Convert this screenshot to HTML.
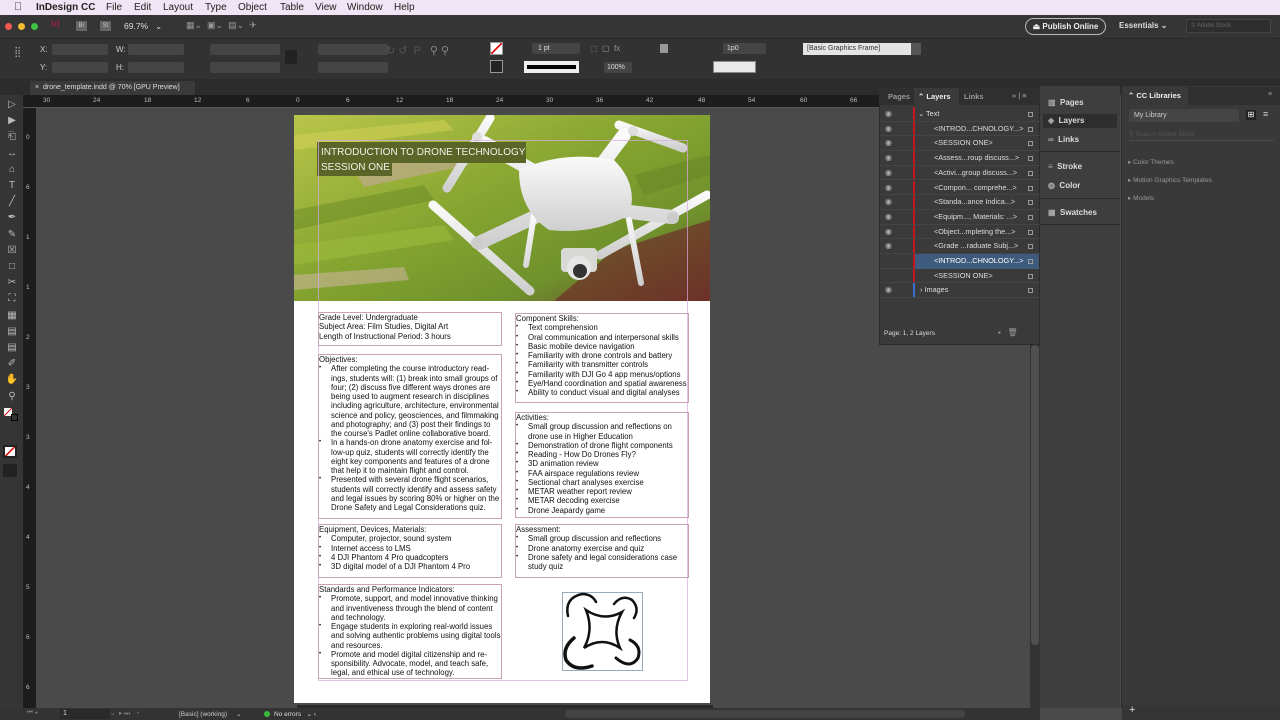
<!DOCTYPE html>
<html><head><meta charset="utf-8"><style>
*{box-sizing:border-box;margin:0;padding:0}
body{width:1280px;height:720px;overflow:hidden;background:#4a4a4a;font-family:"Liberation Sans",sans-serif;position:relative}
.a{position:absolute}
.menu{left:0;top:0;width:1280px;height:15px;background:#efe5f4;font-size:10px;color:#222;line-height:15px}
.menu span{position:absolute;top:0}
.bar{background:#3b3b3b}
.t{color:#ccc;font-size:8px}
.inp{background:#454545;border-radius:2px;height:11px}
.page{left:294px;top:115px;width:416px;height:588px;background:#fff}
.box{position:absolute;border:1px solid #c9a2b6;font-size:7.8px;line-height:9.25px;color:#111;padding:0 0 0 0}
.box p{white-space:nowrap}
.box .b{position:relative;padding-left:12px;white-space:nowrap}
.box .b:before{content:"•";position:absolute;left:0;font-size:6px}
.box .c{padding-left:12px;white-space:nowrap}
.lr{position:absolute;left:0;width:160px;height:14.7px;font-size:7.3px;color:#ddd;line-height:14.7px;border-bottom:1px solid #444}
.lr .eye{position:absolute;left:5px;color:#aaa;font-size:8px}
.lr .red{position:absolute;left:33px;top:0;width:2px;height:100%;background:#c4161c}
.lr .sq{position:absolute;left:148px;top:5px;width:5px;height:5px;border:1px solid #999}
.dk{position:absolute;left:1048px;font-size:8px;color:#ddd;font-weight:bold}
</style></head><body>
<div class="a menu">
<span style="left:14px;font-size:11px">&#63743;</span>
<span style="left:36px;font-weight:bold">InDesign CC</span>
<span style="left:106px">File</span><span style="left:134px">Edit</span><span style="left:163px">Layout</span><span style="left:205px">Type</span><span style="left:238px">Object</span><span style="left:280px">Table</span><span style="left:315px">View</span><span style="left:347px">Window</span><span style="left:394px">Help</span>
</div>
<div class="a bar" style="left:0;top:15px;width:1280px;height:23px;background:#353535"></div>
<div class="a" style="left:5px;top:23px;width:7px;height:7px;border-radius:50%;background:#ee5a52"></div>
<div class="a" style="left:18px;top:23px;width:7px;height:7px;border-radius:50%;background:#f5bd2f"></div>
<div class="a" style="left:31px;top:23px;width:7px;height:7px;border-radius:50%;background:#3ec345"></div>
<div class="a" style="left:51px;top:19px;font-size:10px;color:#8a2150;font-weight:bold">Id</div>
<div class="a" style="left:76px;top:21px;width:11px;height:10px;background:#666;font-size:6px;color:#ccc;text-align:center;line-height:10px">Br</div>
<div class="a" style="left:100px;top:21px;width:11px;height:10px;background:#666;font-size:6px;color:#ccc;text-align:center;line-height:10px">St</div>
<div class="a t" style="left:124px;top:21px;font-size:8.5px;color:#ddd">69.7% &nbsp; ⌄</div>
<div class="a t" style="left:186px;top:20px;font-size:9px;color:#999">▦⌄ &nbsp;▣⌄ &nbsp;▤⌄ &nbsp;✈</div>
<div class="a" style="left:1025px;top:18px;width:81px;height:17px;border:1px solid #bbb;border-radius:9px;font-size:8px;color:#eee;font-weight:bold;line-height:15px;text-align:center">⏏ Publish Online</div>
<div class="a" style="left:1119px;top:21px;font-size:8px;color:#ddd;font-weight:bold">Essentials ⌄</div>
<div class="a" style="left:1186px;top:19px;width:85px;height:14px;background:#2e2e2e;border:1px solid #444;font-size:6px;color:#666;line-height:12px;padding-left:4px">⚲ Adobe Stock</div>
<div class="a" style="left:0;top:38px;width:1280px;height:41px;background:#323232;border-top:1px solid #2a2a2a"></div>
<div class="a t" style="left:14px;top:47px;font-size:10px;color:#999">⣿</div>
<div class="a t" style="left:40px;top:45px">X:</div><div class="a inp" style="left:52px;top:44px;width:56px"></div>
<div class="a t" style="left:40px;top:63px">Y:</div><div class="a inp" style="left:52px;top:62px;width:56px"></div>
<div class="a t" style="left:116px;top:45px">W:</div><div class="a inp" style="left:128px;top:44px;width:56px"></div>
<div class="a t" style="left:116px;top:63px">H:</div><div class="a inp" style="left:128px;top:62px;width:56px"></div>
<div class="a inp" style="left:210px;top:44px;width:70px"></div><div class="a inp" style="left:210px;top:62px;width:70px"></div>
<div class="a" style="left:285px;top:50px;width:12px;height:14px;background:#222"></div>
<div class="a inp" style="left:318px;top:44px;width:70px"></div><div class="a inp" style="left:318px;top:62px;width:70px"></div>
<div class="a t" style="left:386px;top:44px;font-size:11px;color:#555">↻ ↺ &nbsp;P &nbsp; <span style="color:#888">⚲ ⚲</span></div>
<div class="a" style="left:490px;top:42px;width:13px;height:13px;border:1px solid #999;background:linear-gradient(135deg,#fff 44%,#d11 45%,#d11 55%,#fff 56%)"></div>
<div class="a" style="left:490px;top:60px;width:13px;height:13px;background:#222;border:1px solid #999"></div>
<div class="a inp" style="left:532px;top:43px;width:48px;color:#ddd;font-size:7px;line-height:11px;padding-left:6px">1 pt</div>
<div class="a" style="left:524px;top:61px;width:55px;height:12px;background:#eee"><div style="margin:4px 3px;height:4px;background:#000"></div></div>
<div class="a t" style="left:590px;top:44px;font-size:8px;color:#999">⬚ &nbsp;▢ &nbsp;fx</div>
<div class="a inp" style="left:604px;top:62px;width:28px;color:#ddd;font-size:7px;line-height:11px;padding-left:3px">100%</div>
<div class="a" style="left:660px;top:44px;width:8px;height:9px;background:#999"></div>
<div class="a inp" style="left:723px;top:43px;width:43px;color:#ddd;font-size:7px;line-height:11px;padding-left:4px">1p0</div>
<div class="a" style="left:713px;top:61px;width:43px;height:12px;background:#e8e8e8;border:1px solid #888"></div>
<div class="a" style="left:803px;top:43px;width:108px;height:12px;background:#e4e4e4;font-size:7px;color:#333;line-height:12px;padding-left:4px">[Basic Graphics Frame]</div>
<div class="a" style="left:911px;top:43px;width:10px;height:12px;background:#555"></div>
<div class="a" style="left:0;top:79px;width:1280px;height:16px;background:#2c2c2c"></div>
<div class="a" style="left:30px;top:81px;width:165px;height:14px;background:#3a3a3a;font-size:7px;color:#ddd;line-height:14px;padding-left:5px">×&nbsp; drone_template.indd @ 70% [GPU Preview]</div>
<div class="a" style="left:0;top:95px;width:23px;height:613px;background:#353535"></div>
<div class="a" style="left:4px;top:97px;font-size:10px;color:#bbb;line-height:16.2px;width:16px;text-align:center">▷<br>▶<br>⎗<br>↔<br>⌂<br>T<br>╱<br>✒<br>✎<br>☒<br>□<br>✂<br>⛶<br>▦<br>▤<br>▤<br>✐<br>✋<br>⚲</div>
<div class="a" style="left:4px;top:408px;width:8px;height:8px;background:linear-gradient(135deg,#fff 44%,#d11 45%,#d11 55%,#fff 56%)"></div>
<div class="a" style="left:11px;top:414px;width:7px;height:7px;border:1.5px solid #000;background:#333"></div>
<div class="a" style="left:3px;top:445px;width:14px;height:13px;background:#222"></div>
<div class="a" style="left:5px;top:447px;width:10px;height:9px;background:linear-gradient(135deg,#fff 44%,#d11 45%,#d11 55%,#fff 56%)"></div>
<div class="a" style="left:3px;top:464px;width:14px;height:13px;background:#222"></div>
<div class="a" style="left:23px;top:95px;width:1007px;height:13px;background:#1d1d1d;font-size:6.5px;color:#bbb;border-bottom:1px solid #555"></div>
<div class="a" style="left:23px;top:108px;width:13px;height:600px;background:#1d1d1d"></div>
<div class="a" style="top:97px;left:0;font-size:6.5px;color:#bbb;width:900px">
<span class="a" style="left:43px">30</span><span class="a" style="left:93px">24</span><span class="a" style="left:144px">18</span><span class="a" style="left:194px">12</span><span class="a" style="left:246px">6</span><span class="a" style="left:296px">0</span><span class="a" style="left:346px">6</span><span class="a" style="left:396px">12</span><span class="a" style="left:446px">18</span><span class="a" style="left:496px">24</span><span class="a" style="left:546px">30</span><span class="a" style="left:596px">36</span><span class="a" style="left:646px">42</span><span class="a" style="left:698px">48</span><span class="a" style="left:748px">54</span><span class="a" style="left:800px">60</span><span class="a" style="left:850px">66</span></div>
<div class="a" style="left:26px;top:113px;font-size:6.5px;color:#bbb;line-height:50px;width:8px">0<br>6<br>1<br>1<br>2<br>3<br>3<br>4<br>4<br>5<br>6<br>6</div>
<div class="a" style="left:1030px;top:95px;width:10px;height:613px;background:#333"></div>
<div class="a" style="left:1031px;top:345px;width:8px;height:300px;background:#505050;border-radius:4px"></div>
<div class="a" style="left:297px;top:705px;width:416px;height:3px;background:#2a2a2a"></div>
<div class="a page">
 <svg width="416" height="186" style="position:absolute;left:0;top:0">
  <defs>
   <linearGradient id="g" x1="0" y1="0" x2="1" y2="1"><stop offset="0" stop-color="#b9c54a"/><stop offset=".45" stop-color="#86a530"/><stop offset=".75" stop-color="#6f912c"/><stop offset="1" stop-color="#6b3a2a"/></linearGradient>
   <linearGradient id="w" x1="0" y1="0" x2="0" y2="1"><stop offset="0" stop-color="#fafafa"/><stop offset="1" stop-color="#cfcfcf"/></linearGradient>
  </defs>
  <rect width="416" height="186" fill="url(#g)"/>
  <path d="M0 20 L150 5 L160 15 L0 35 Z" fill="#d0cf55" opacity=".6"/>
  <path d="M60 55 L170 35 L175 50 L70 72 Z" fill="#c9a7a4" opacity=".55"/>
  <path d="M0 95 L130 70 L140 85 L0 115 Z" fill="#5f7f22" opacity=".4"/>
  <path d="M0 130 L150 110 L160 125 L0 150 Z" fill="#9cba3c" opacity=".6"/>
  <path d="M0 160 L110 152 L115 165 L0 175 Z" fill="#d7b8b0" opacity=".5"/>
  <path d="M320 135 L416 105 L416 186 L260 186 Z" fill="#6e2e2a" opacity=".7"/>
  <path d="M340 60 L416 40 L416 60 L350 80 Z" fill="#5f7f22" opacity=".4"/>
  <g stroke="url(#w)" stroke-linecap="round" fill="none">
   <path d="M153 73 L196 3" stroke-width="9"/>
   <path d="M325 10 L389 33" stroke-width="9"/>
   <path d="M139 90 L236 176" stroke-width="9"/>
   <path d="M306 140 L413 80" stroke-width="9"/>
   <path d="M190 28 L250 62 M330 20 L300 60 M185 128 L245 100 M378 102 L320 95" stroke-width="14"/>
   <path d="M240 100 L232 150 M335 105 L347 168" stroke-width="6"/>
  </g>
  <path d="M225 55 Q270 35 320 45 Q345 70 335 100 Q300 120 255 115 Q225 95 225 55Z" fill="url(#w)"/>
  <circle cx="183" cy="22" r="5" fill="#ddd"/><circle cx="339" cy="16" r="5" fill="#ddd"/><circle cx="183" cy="128" r="6" fill="#ccc"/><circle cx="379" cy="103" r="6" fill="#ccc"/>
  <rect x="267" y="133" width="36" height="24" rx="4" fill="#d8d8d4"/>
  <circle cx="285" cy="153" r="12" fill="#e6e6e6"/><circle cx="286" cy="156" r="7" fill="#333"/>
 </svg>
 <div class="a" style="left:23px;top:27px;width:209px;height:21px;background:#5a6528;color:#f3f3e8;font-size:10px;line-height:21px;padding-left:4px">INTRODUCTION TO DRONE TECHNOLOGY</div>
 <div class="a" style="left:23px;top:44px;width:75px;height:17px;background:#5a6528;color:#f3f3e8;font-size:10px;line-height:17px;padding-left:4px">SESSION ONE</div>
 <div class="a" style="left:24px;top:25px;width:370px;height:541px;border:1px solid #d9a8e0;opacity:.7"></div>
</div>
<div class="box" style="left:318px;top:312px;width:184px;height:34px"><p>Grade Level: Undergraduate</p><p>Subject Area: Film Studies, Digital Art</p><p>Length of Instructional Period: 3 hours</p></div>
<div class="box" style="left:318px;top:354px;width:184px;height:165px"><p>Objectives:</p>
<p class="b">After completing the course introductory read-</p><p class="c">ings, students will: (1) break into small groups of</p><p class="c">four; (2) discuss five different ways drones are</p><p class="c">being used to augment research in disciplines</p><p class="c">including agriculture, architecture, environmental</p><p class="c">science and policy, geosciences, and filmmaking</p><p class="c">and photography; and (3) post their findings to</p><p class="c">the course's Padlet online collaborative board.</p>
<p class="b">In a hands-on drone anatomy exercise and fol-</p><p class="c">low-up quiz, students will correctly identify the</p><p class="c">eight key components and features of a drone</p><p class="c">that help it to maintain flight and control.</p>
<p class="b">Presented with several drone flight scenarios,</p><p class="c">students will correctly identify and assess safety</p><p class="c">and legal issues by scoring 80% or higher on the</p><p class="c">Drone Safety and Legal Considerations quiz.</p></div>
<div class="box" style="left:318px;top:524px;width:184px;height:54px"><p>Equipment, Devices, Materials:</p><p class="b">Computer, projector, sound system</p><p class="b">Internet access to LMS</p><p class="b">4 DJI Phantom 4 Pro quadcopters</p><p class="b">3D digital model of a DJI Phantom 4 Pro</p></div>
<div class="box" style="left:318px;top:584px;width:184px;height:95px"><p>Standards and Performance Indicators:</p><p class="b">Promote, support, and model innovative thinking</p><p class="c">and inventiveness through the blend of content</p><p class="c">and technology.</p><p class="b">Engage students in exploring real-world issues</p><p class="c">and solving authentic problems using digital tools</p><p class="c">and resources.</p><p class="b">Promote and model digital citizenship and re-</p><p class="c">sponsibility. Advocate, model, and teach safe,</p><p class="c">legal, and ethical use of technology.</p></div>
<div class="box" style="left:515px;top:313px;width:174px;height:90px"><p>Component Skills:</p><p class="b">Text comprehension</p><p class="b">Oral communication and interpersonal skills</p><p class="b">Basic mobile device navigation</p><p class="b">Familiarity with drone controls and battery</p><p class="b">Familiarity with transmitter controls</p><p class="b">Familiarity with DJI Go 4 app menus/options</p><p class="b">Eye/Hand coordination and spatial awareness</p><p class="b">Ability to conduct visual and digital analyses</p></div>
<div class="box" style="left:515px;top:412px;width:174px;height:106px"><p>Activities:</p><p class="b">Small group discussion and reflections on</p><p class="c">drone use in Higher Education</p><p class="b">Demonstration of drone flight components</p><p class="b">Reading - How Do Drones Fly?</p><p class="b">3D animation review</p><p class="b">FAA airspace regulations review</p><p class="b">Sectional chart analyses exercise</p><p class="b">METAR weather report review</p><p class="b">METAR decoding exercise</p><p class="b">Drone Jeapardy game</p></div>
<div class="box" style="left:515px;top:524px;width:174px;height:54px"><p>Assessment:</p><p class="b">Small group discussion and reflections</p><p class="b">Drone anatomy exercise and quiz</p><p class="b">Drone safety and legal considerations case</p><p class="c">study quiz</p></div>
<div class="a" style="left:562px;top:592px;width:81px;height:79px;border:1px solid #9ab"></div>
<svg class="a" style="left:562px;top:592px" width="81" height="79" viewBox="0 0 81 79">
 <g fill="none" stroke="#111" stroke-linecap="round">
  <path d="M24 18 Q42 30 60 20 Q50 38 58 56 Q40 44 22 56 Q32 38 24 18Z" stroke-width="2.5"/>
  <path d="M6 24 Q2 6 20 2 Q30 2 34 10" stroke-width="2.5"/>
  <path d="M52 12 Q60 2 70 8 Q78 16 72 26" stroke-width="2.5"/>
  <path d="M12 46 Q0 56 4 68 Q12 80 30 74" stroke-width="3.5"/>
  <path d="M54 66 Q68 78 76 66 Q80 54 68 48" stroke-width="3"/>
 </g>
</svg>
<div class="a" style="left:879px;top:87px;width:161px;height:258px;background:#3a3a3a;border:1px solid #2a2a2a"></div>
<div class="a" style="left:879px;top:87px;width:161px;height:18px;background:#2f2f2f"></div>
<div class="a" style="left:914px;top:88px;width:45px;height:17px;background:#3a3a3a"></div>
<div class="a" style="left:888px;top:92px;font-size:7.5px;color:#999;font-weight:bold">Pages</div>
<div class="a" style="left:918px;top:92px;font-size:7.5px;color:#eee;font-weight:bold">⌃ Layers</div>
<div class="a" style="left:964px;top:92px;font-size:7.5px;color:#999;font-weight:bold">Links</div>
<div class="a" style="left:1012px;top:91px;font-size:7.5px;color:#aaa">» | ≡</div>
<div class="a" style="left:880px;top:107px;width:159px;height:190px">
 <div class="lr" style="top:0"><span class="eye">◉</span><span class="red"></span><span style="position:absolute;left:38px">⌄ Text</span><span class="sq"></span></div>
 <div class="lr" style="top:14.7px"><span class="eye">◉</span><span class="red"></span><span style="position:absolute;left:54px">&lt;INTROD...CHNOLOGY...&gt;</span><span class="sq"></span></div>
 <div class="lr" style="top:29.4px"><span class="eye">◉</span><span class="red"></span><span style="position:absolute;left:54px">&lt;SESSION ONE&gt;</span><span class="sq"></span></div>
 <div class="lr" style="top:44.1px"><span class="eye">◉</span><span class="red"></span><span style="position:absolute;left:54px">&lt;Assess...roup discuss...&gt;</span><span class="sq"></span></div>
 <div class="lr" style="top:58.8px"><span class="eye">◉</span><span class="red"></span><span style="position:absolute;left:54px">&lt;Activi...group discuss...&gt;</span><span class="sq"></span></div>
 <div class="lr" style="top:73.5px"><span class="eye">◉</span><span class="red"></span><span style="position:absolute;left:54px">&lt;Compon... comprehe...&gt;</span><span class="sq"></span></div>
 <div class="lr" style="top:88.2px"><span class="eye">◉</span><span class="red"></span><span style="position:absolute;left:54px">&lt;Standa...ance Indica...&gt;</span><span class="sq"></span></div>
 <div class="lr" style="top:102.9px"><span class="eye">◉</span><span class="red"></span><span style="position:absolute;left:54px">&lt;Equipm..., Materials: ...&gt;</span><span class="sq"></span></div>
 <div class="lr" style="top:117.6px"><span class="eye">◉</span><span class="red"></span><span style="position:absolute;left:54px">&lt;Object...mpleting the...&gt;</span><span class="sq"></span></div>
 <div class="lr" style="top:132.3px"><span class="eye">◉</span><span class="red"></span><span style="position:absolute;left:54px">&lt;Grade ...raduate Subj...&gt;</span><span class="sq"></span></div>
 <div class="lr" style="top:147px"><span class="red"></span><span style="position:absolute;left:35px;width:124px;height:14.7px;background:#3e5a7c"></span><span style="position:absolute;left:54px;color:#fff">&lt;INTROD...CHNOLOGY...&gt;</span><span class="sq"></span></div>
 <div class="lr" style="top:161.7px"><span class="red"></span><span style="position:absolute;left:54px">&lt;SESSION ONE&gt;</span><span class="sq"></span></div>
 <div class="lr" style="top:176.4px"><span class="eye">◉</span><span class="red" style="background:#3a6fd0"></span><span style="position:absolute;left:40px">› Images</span><span class="sq"></span></div>
</div>
<div class="a" style="left:884px;top:330px;font-size:6.5px;color:#ddd">Page: 1, 2 Layers</div>
<div class="a" style="left:998px;top:328px;font-size:8px;color:#999">▪ &nbsp; 🗑</div>
<div class="a" style="left:1040px;top:86px;width:80px;height:622px;background:#3e3e3e"></div>
<div class="a" style="left:1043px;top:114px;width:74px;height:14px;background:#2e2e2e"></div>
<div class="a" style="left:1040px;top:151px;width:80px;height:1px;background:#2a2a2a"></div>
<div class="a" style="left:1040px;top:198px;width:80px;height:1px;background:#2a2a2a"></div>
<div class="a" style="left:1040px;top:224px;width:80px;height:1px;background:#2a2a2a"></div>
<div class="dk" style="top:98px"><span style="color:#aaa">▥</span> &nbsp;Pages</div>
<div class="dk" style="top:116px"><span style="color:#aaa">◈</span> &nbsp;Layers</div>
<div class="dk" style="top:135px"><span style="color:#aaa">∞</span> &nbsp;Links</div>
<div class="dk" style="top:162px"><span style="color:#aaa">≡</span> &nbsp;Stroke</div>
<div class="dk" style="top:181px"><span style="color:#aaa">◍</span> &nbsp;Color</div>
<div class="dk" style="top:208px"><span style="color:#aaa">▦</span> &nbsp;Swatches</div>
<div class="a" style="left:1121px;top:86px;width:159px;height:622px;background:#393939;border-left:1px solid #2a2a2a"></div>
<div class="a" style="left:1122px;top:87px;width:158px;height:18px;background:#2f2f2f"></div>
<div class="a" style="left:1122px;top:87px;width:66px;height:18px;background:#393939;font-size:7.5px;color:#eee;font-weight:bold;line-height:18px;padding-left:6px">⌃ CC Libraries</div>
<div class="a" style="left:1268px;top:91px;font-size:7px;color:#999">≡</div>
<div class="a" style="left:1129px;top:109px;width:110px;height:13px;background:#444;font-size:7px;color:#ccc;line-height:13px;padding-left:5px">My Library</div>
<div class="a" style="left:1246px;top:110px;width:10px;height:10px;background:#222;color:#fff;font-size:8px;line-height:10px;text-align:center">⊞</div>
<div class="a" style="left:1263px;top:109px;font-size:9px;color:#ccc">≡</div>
<div class="a" style="left:1129px;top:128px;width:145px;height:13px;border-bottom:1px solid #4a4a4a;font-size:6.5px;color:#555;line-height:13px">⚲ Search Adobe Stock</div>
<div class="a" style="left:1128px;top:154px;font-size:6.5px;color:#999;line-height:18px">▸ Color Themes<br>▸ Motion Graphics Templates<br>▸ Models</div>
<div class="a" style="left:1122px;top:705px;width:158px;height:15px;background:#353535"></div>
<div class="a" style="left:1129px;top:704px;color:#ddd;font-size:11px">+</div>
<div class="a" style="left:0;top:708px;width:1040px;height:12px;background:#333"></div>
<div class="a" style="left:27px;top:709px;font-size:6.5px;color:#888">⏮ ◂</div>
<div class="a" style="left:60px;top:709px;width:50px;height:10px;background:#2a2a2a;font-size:7px;color:#ddd;padding-left:3px;line-height:10px">1</div>
<div class="a" style="left:110px;top:709px;font-size:6.5px;color:#888">⌄ &nbsp;▸ ⏭ &nbsp; ◔</div>
<div class="a" style="left:179px;top:710px;font-size:6.5px;color:#ccc">[Basic] (working) &nbsp; &nbsp; ⌄</div>
<div class="a" style="left:264px;top:711px;width:6px;height:6px;border-radius:50%;background:#3cba3c"></div>
<div class="a" style="left:274px;top:710px;font-size:6.5px;color:#ddd">No errors &nbsp; ⌄ ‹</div>
<div class="a" style="left:565px;top:710px;width:400px;height:8px;background:#444;border-radius:4px"></div>
</body></html>
